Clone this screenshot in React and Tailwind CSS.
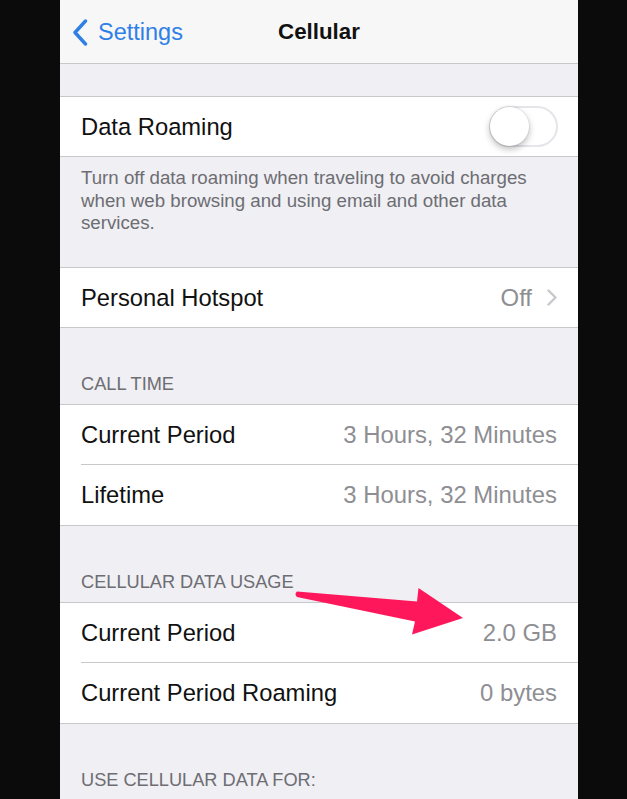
import clsx from "clsx";

const font = { fontFamily: '"Liberation Sans", Arial, Helvetica, sans-serif' };

function Row({ label, value, last }) {
  return (
    <div className="bg-white pl-[21px]">
      <div
        className={clsx(
          "flex h-[60px] items-center justify-between pr-[21px]",
          !last && "border-b border-[#c8c7cc]",
        )}
      >
        <span className="text-[23.75px] leading-none text-[#111]">{label}</span>
        <span className="text-[23.9px] leading-none text-[#8e8e93]">{value}</span>
      </div>
    </div>
  );
}

function Group({ children }) {
  return <div className="border-y border-[#c8c7cc] bg-white">{children}</div>;
}

function Header({ children }) {
  return (
    <div className="flex h-[76px] items-end pb-[9px] pl-[21px]">
      <span className="text-[18.2px] leading-[22px] uppercase text-[#6d6d72]">{children}</span>
    </div>
  );
}

function Toggle() {
  return (
    <div className="flex h-[41px] w-[69px] items-center rounded-full border-2 border-[#e5e5ea] bg-white">
      <div className="-ml-[1px] h-[39px] w-[39px] rounded-full bg-white shadow-[0_3px_7px_rgba(0,0,0,0.28),0_0_0_1px_rgba(0,0,0,0.05)]" />
    </div>
  );
}

export default function App() {
  return (
    <div className="relative flex h-[799px] w-[627px] overflow-hidden bg-[#0b0b0b]" style={font}>
      <div className="w-[60px] shrink-0" />
      <div className="w-[518px] shrink-0 bg-[#efeff4]">
        {/* nav bar */}
        <div className="grid h-[64px] grid-cols-[1fr_auto_1fr] items-center border-b border-[#c8c7cc] bg-[#f7f7f8] pt-[2px]">
          <div className="flex items-center gap-[10px] pl-[12px] text-[#2f80e6]">
            <svg width="16" height="27" viewBox="0 0 16 27" fill="none">
              <path d="M13.5 2 L3 13.5 L13.5 25" stroke="currentColor" strokeWidth="3.4" strokeLinecap="round" strokeLinejoin="round" />
            </svg>
            <span className="text-[23.5px] leading-none">Settings</span>
          </div>
          <span className="text-[22.3px] font-bold leading-none text-[#111]">Cellular</span>
          <div />
        </div>

        <div className="h-[32px]" />

        <div className="border-y border-[#c8c7cc] bg-white pl-[21px]">
          <div className="flex h-[59px] items-center justify-between pr-[20px]">
            <span className="text-[23.75px] leading-none text-[#111]">Data Roaming</span>
            <Toggle />
          </div>
        </div>

        <div className="h-[110px] pl-[21px] pr-[18px] pt-[10px]">
          <p className="text-[18.7px] leading-[22.5px] text-[#6d6d72]">
            Turn off data roaming when traveling to avoid charges when web browsing and using email and other data services.
          </p>
        </div>

        <div className="border-y border-[#c8c7cc] bg-white pl-[21px]">
          <div className="flex h-[59px] items-center justify-between pr-[21px]">
            <span className="text-[23.75px] leading-none text-[#111]">Personal Hotspot</span>
            <span className="flex items-center gap-[15px] text-[23.9px] leading-none text-[#8e8e93]">
              Off
              <svg width="10" height="17" viewBox="0 0 10 17" fill="none">
                <path d="M1.5 1.5 L8.5 8.5 L1.5 15.5" stroke="#c7c7cc" strokeWidth="2.4" strokeLinecap="round" strokeLinejoin="round" />
              </svg>
            </span>
          </div>
        </div>

        <Header>Call Time</Header>
        <Group>
          <Row label="Current Period" value="3 Hours, 32 Minutes" />
          <Row label="Lifetime" value="3 Hours, 32 Minutes" last />
        </Group>

        <Header>Cellular Data Usage</Header>
        <Group>
          <Row label="Current Period" value="2.0 GB" />
          <Row label="Current Period Roaming" value="0 bytes" last />
        </Group>

        <Header>Use Cellular Data For:</Header>
      </div>
      <div className="flex-1" />

      {/* annotation arrow drawn over the screenshot */}
      <svg className="pointer-events-none absolute left-0 top-0" width="627" height="799" viewBox="0 0 627 799">
        <path
          d="M297 591.5 L417 601.5 L418.5 588 L463 618 L412 634.5 L415 621.5 L297 597 Q294 594.2 297 591.5 Z"
          fill="#ff175c"
        />
      </svg>
    </div>
  );
}
